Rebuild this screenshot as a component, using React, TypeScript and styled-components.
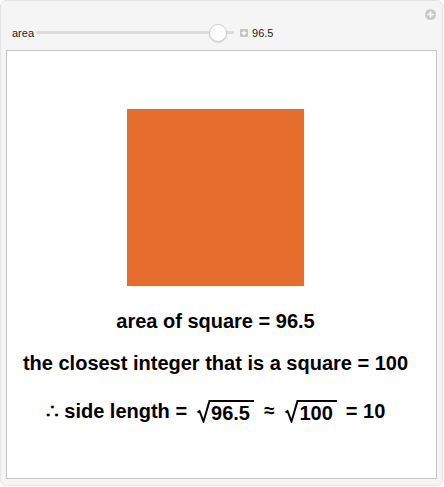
import styled, { createGlobalStyle } from "styled-components";

const GlobalStyle = createGlobalStyle`
  body {
    margin: 0;
    background: #ffffff;
    font-family: "Liberation Sans", Arial, sans-serif;
  }
`;

const Panel = styled.div`
  width: 443px;
  height: 486px;
  box-sizing: border-box;
  border: 1px solid #e4e4e4;
  border-radius: 6px;
  background: #f5f5f5;
  display: flex;
  flex-direction: column;
`;

const Header = styled.div`
  height: 23px;
  display: flex;
  justify-content: flex-end;
  align-items: flex-start;
`;

const CloseButton = styled.div`
  width: 11px;
  height: 11px;
  margin: 8px 6px 0 0;
  border-radius: 50%;
  background: #c9c9c9;
  display: flex;
  align-items: center;
  justify-content: center;
`;

const Controls = styled.div`
  height: 17px;
  display: flex;
  align-items: center;
  padding-left: 11px;
  font-size: 11px;
  color: #222;
`;

const Label = styled.span`
  margin-right: 2px;
`;

const Track = styled.div`
  position: relative;
  width: 198px;
  height: 3px;
  border-radius: 2px;
  background: #dcdcdc;
`;

const Thumb = styled.div`
  position: absolute;
  top: 50%;
  width: 16px;
  height: 16px;
  margin: -9px 0 0 -9px;
  border-radius: 50%;
  background: #ffffff;
  border: 1px solid #cfcfcf;
  box-shadow: 0 1px 1px rgba(0, 0, 0, 0.12);
`;

const PlusBox = styled.div`
  width: 8px;
  height: 8px;
  margin: 0 4px 0 6px;
  background: #c4c4c4;
  border-radius: 1px;
  display: flex;
  align-items: center;
  justify-content: center;
`;

const Canvas = styled.div`
  flex: 1;
  margin: 9px 5px 6px 5px;
  background: #ffffff;
  border: 1px solid #c6c6c6;
  display: flex;
  flex-direction: column;
  align-items: center;
  padding: 58px 12px 0 0;
`;

const Square = styled.div`
  width: 177px;
  height: 177px;
  background: #e66c2c;
`;

const Line = styled.div<{ $gap: number }>`
  margin-top: ${(p) => p.$gap}px;
  font-size: 20px;
  font-weight: bold;
  line-height: 23px;
  color: #000;
  white-space: nowrap;
  display: flex;
  align-items: flex-end;
`;

const Radical = styled.span`
  display: inline-flex;
  align-items: stretch;
  margin: 0 9px 0 10px;
`;

const Radicand = styled.span`
  border-top: 2px solid #000;
  padding: 1px 4px 0 1px;
  line-height: 20px;
`;

const Approx = styled.span`
  font-size: 19px;
  margin: 0 1px 1px;
`;

function Sqrt({ children }: { children: React.ReactNode }) {
  return (
    <Radical>
      <svg width="13" height="23" viewBox="0 0 13 23">
        <polyline points="0.5,12.5 2.5,11 6.5,21.5 12.5,1 13,1" fill="none" stroke="#000" strokeWidth="2" strokeLinejoin="miter" />
      </svg>
      <Radicand>{children}</Radicand>
    </Radical>
  );
}

export default function App() {
  const area = 96.5;
  const min = 0;
  const max = 105;
  const pos = ((area - min) / (max - min)) * 198;

  return (
    <>
      <GlobalStyle />
      <Panel>
        <Header>
          <CloseButton>
            <svg width="7" height="7" viewBox="0 0 7 7">
              <path d="M3.5 0.5v6M0.5 3.5h6" stroke="#fff" strokeWidth="1.6" />
            </svg>
          </CloseButton>
        </Header>
        <Controls>
          <Label>area</Label>
          <Track>
            <Thumb style={{ left: pos }} />
          </Track>
          <PlusBox>
            <svg width="6" height="6" viewBox="0 0 6 6">
              <path d="M3 0.5v5M0.5 3h5" stroke="#fff" strokeWidth="1.3" />
            </svg>
          </PlusBox>
          <span>{area}</span>
        </Controls>
        <Canvas>
          <Square />
          <Line $gap={24}>area of square = {area}</Line>
          <Line $gap={19}>the closest integer that is a square = 100</Line>
          <Line $gap={24}>
            ∴ side length =
            <Sqrt>96.5</Sqrt>
            <Approx>≈</Approx>
            <Sqrt>100</Sqrt>= 10
          </Line>
        </Canvas>
      </Panel>
    </>
  );
}
